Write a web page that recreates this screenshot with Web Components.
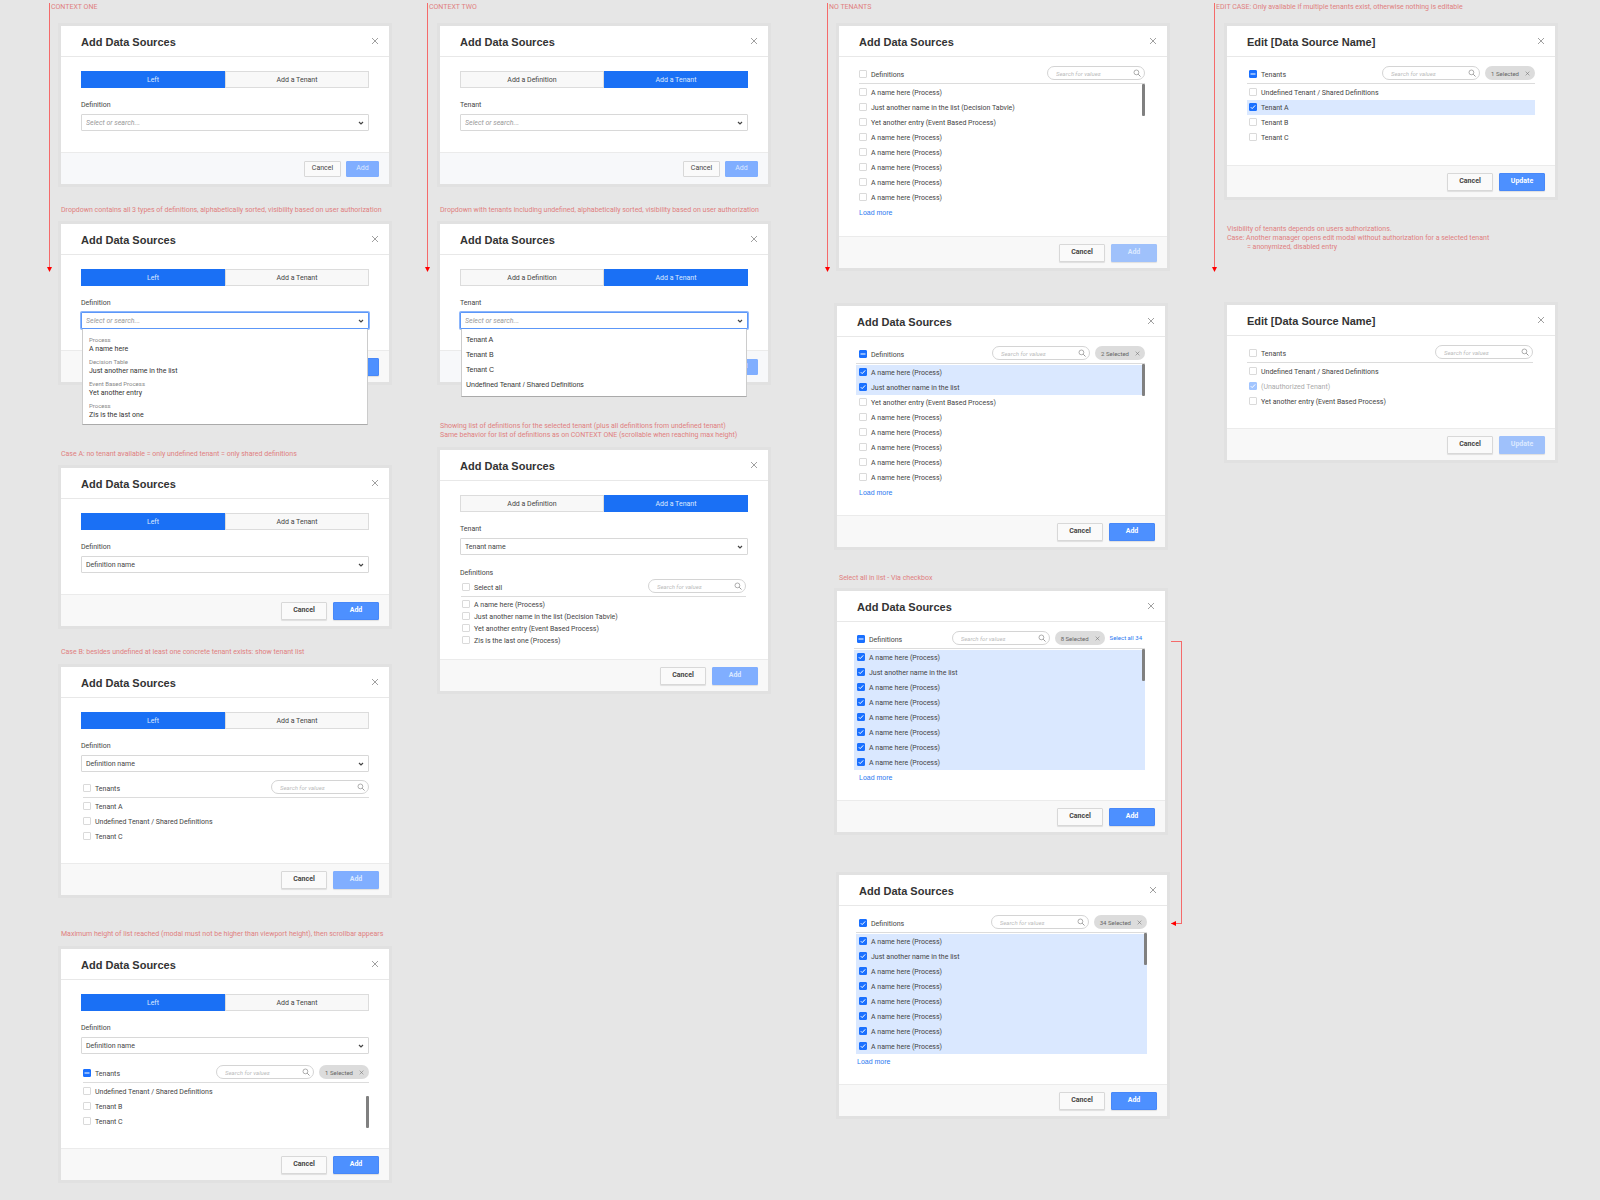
<!DOCTYPE html>
<html lang="en">
<head>
<meta charset="utf-8">
<title>Data Sources Modal</title>
<style>
    body {
        margin: 0;
        min-height: 100vh;
        background: #e6e6e6;
        color: #444;
        font: 7px/9px Roboto, "Liberation Sans", sans-serif;
    }

    main {
        display: grid;
        grid-template-columns: 378fr 400fr 387fr 341fr;
        padding: 3px 45px 0 49px;
    }

    .c1 { padding-right: 38px; }
    .c2 { padding-right: 59px; --indent: 13px; }
    .c3 { padding-right: 47px; }
    .c4 { --indent: 13px; }

    .outdent { margin: 0 2px 0 -2px; }
    .flow { position: relative; }
    .deep { padding-left: 20px; }
</style>
</head>
<body>
<main>
    <ds-context class="c1" heading="CONTEXT ONE">
        <ds-step>
            <ds-modal heading="Add Data Sources" action="Add" compact disabled style="--end: 21px">
                <ds-tabs first="Left" second="Add a Tenant" active="first"></ds-tabs>
                <ds-select label="Definition" placeholder="Select or search..."></ds-select>
            </ds-modal>
        </ds-step>
        <ds-step style="--before: 22px">
            <span slot="note">Dropdown contains all 3 types of definitions, alphabetically sorted, visibility based on user authorization</span>
            <ds-modal heading="Add Data Sources" action="Add" style="--end: 21px">
                <ds-tabs first="Left" second="Add a Tenant" active="first"></ds-tabs>
                <ds-select label="Definition" placeholder="Select or search..." open>
                    <ds-option kind="Process">A name here</ds-option>
                    <ds-option kind="Decision Table">Just another name in the list</ds-option>
                    <ds-option kind="Event Based Process">Yet another entry</ds-option>
                    <ds-option kind="Process">Zis is the last one</ds-option>
                </ds-select>
            </ds-modal>
        </ds-step>
        <ds-step style="--before: 68px">
            <span slot="note">Case A: no tenant available = only undefined tenant = only shared definitions</span>
            <ds-modal heading="Add Data Sources" action="Add" style="--end: 21px">
                <ds-tabs first="Left" second="Add a Tenant" active="first"></ds-tabs>
                <ds-select label="Definition" value="Definition name"></ds-select>
            </ds-modal>
        </ds-step>
        <ds-step style="--before: 22px; --note-gap: 10px">
            <span slot="note">Case B: besides undefined at least one concrete tenant exists: show tenant list</span>
            <ds-modal heading="Add Data Sources" action="Add" disabled style="--end: 19px">
                <ds-tabs first="Left" second="Add a Tenant" active="first"></ds-tabs>
                <ds-select label="Definition" value="Definition name"></ds-select>
                <ds-list label="Tenants" style="--list-margin: 8px 0 0 2px">
                    <ds-check>Tenant A</ds-check>
                    <ds-check>Undefined Tenant / Shared Definitions</ds-check>
                    <ds-check>Tenant C</ds-check>
                </ds-list>
            </ds-modal>
        </ds-step>
        <ds-step style="--before: 35px; --note-gap: 10px">
            <span slot="note">Maximum height of list reached (modal must not be higher than viewport height), then scrollbar appears</span>
            <ds-modal heading="Add Data Sources" action="Add" style="--end: 19px">
                <ds-tabs first="Left" second="Add a Tenant" active="first"></ds-tabs>
                <ds-select label="Definition" value="Definition name"></ds-select>
                <ds-list label="Tenants" state="mixed" selected="1 Selected" scroll style="--list-margin: 11px 0 0 2px; --thumb-top: 31px">
                    <ds-check>Undefined Tenant / Shared Definitions</ds-check>
                    <ds-check>Tenant B</ds-check>
                    <ds-check>Tenant C</ds-check>
                </ds-list>
            </ds-modal>
        </ds-step>
    </ds-context>

    <ds-context class="c2" heading="CONTEXT TWO">
        <ds-step>
            <ds-modal heading="Add Data Sources" action="Add" compact disabled style="--end: 21px">
                <ds-tabs first="Add a Definition" second="Add a Tenant" active="second"></ds-tabs>
                <ds-select label="Tenant" placeholder="Select or search..."></ds-select>
            </ds-modal>
        </ds-step>
        <ds-step style="--before: 22px">
            <span slot="note">Dropdown with tenants including undefined, alphabetically sorted, visibility based on user authorization</span>
            <ds-modal heading="Add Data Sources" action="Add" compact disabled style="--end: 21px">
                <ds-tabs first="Add a Definition" second="Add a Tenant" active="second"></ds-tabs>
                <ds-select label="Tenant" placeholder="Select or search..." open>
                    <ds-option>Tenant A</ds-option>
                    <ds-option>Tenant B</ds-option>
                    <ds-option>Tenant C</ds-option>
                    <ds-option>Undefined Tenant / Shared Definitions</ds-option>
                </ds-select>
            </ds-modal>
        </ds-step>
        <ds-step style="--before: 40px; --note-gap: 10px">
            <span slot="note">Showing list of definitions for the selected tenant (plus all definitions from undefined tenant)<br>Same behavior for list of definitions as on CONTEXT ONE (scrollable when reaching max height)</span>
            <ds-modal heading="Add Data Sources" action="Add" disabled style="--end: 13px">
                <ds-tabs first="Add a Definition" second="Add a Tenant" active="second"></ds-tabs>
                <ds-select label="Tenant" value="Tenant name"></ds-select>
                <ds-list caption="Definitions" label="Select all" style="--list-margin: 14px 2px 0 1px; --row: 12px; --pad: 1px">
                    <ds-check>A name here (Process)</ds-check>
                    <ds-check>Just another name in the list (Decision Tabvle)</ds-check>
                    <ds-check>Yet another entry (Event Based Process)</ds-check>
                    <ds-check>Zis is the last one (Process)</ds-check>
                </ds-list>
            </ds-modal>
        </ds-step>
    </ds-context>

    <ds-context class="c3" heading="NO TENANTS">
        <ds-step>
            <ds-modal heading="Add Data Sources" action="Add" disabled pale style="--start: 9px; --end: 19px">
                <ds-list label="Definitions" more scroll style="--list-margin: 0 2px 0 0">
                    <ds-check>A name here (Process)</ds-check>
                    <ds-check>Just another name in the list (Decision Tabvle)</ds-check>
                    <ds-check>Yet another entry (Event Based Process)</ds-check>
                    <ds-check>A name here (Process)</ds-check>
                    <ds-check>A name here (Process)</ds-check>
                    <ds-check>A name here (Process)</ds-check>
                    <ds-check>A name here (Process)</ds-check>
                    <ds-check>A name here (Process)</ds-check>
                </ds-list>
            </ds-modal>
        </ds-step>
        <ds-step class="outdent" style="--before: 38px">
            <ds-modal heading="Add Data Sources" action="Add" style="--start: 9px; --end: 18px">
                <ds-list label="Definitions" state="mixed" selected="2 Selected" more scroll style="--list-margin: 0 0 0 -1px; --pad: 3px">
                    <ds-check checked>A name here (Process)</ds-check>
                    <ds-check checked>Just another name in the list</ds-check>
                    <ds-check>Yet another entry (Event Based Process)</ds-check>
                    <ds-check>A name here (Process)</ds-check>
                    <ds-check>A name here (Process)</ds-check>
                    <ds-check>A name here (Process)</ds-check>
                    <ds-check>A name here (Process)</ds-check>
                    <ds-check>A name here (Process)</ds-check>
                </ds-list>
            </ds-modal>
        </ds-step>
        <div class="flow">
            <ds-step style="--before: 27px; --note-gap: 8px">
                <span slot="note">Select all in list - Via checkbox</span>
                <ds-modal class="outdent" heading="Add Data Sources" action="Add" style="--start: 9px; --end: 18px">
                    <ds-list label="Definitions" state="mixed" selected="8 Selected" all="Select all 34" more scroll style="--list-margin: 0 0 0 -3px; --pad: 3px; --more: 5px">
                        <ds-check checked>A name here (Process)</ds-check>
                        <ds-check checked>Just another name in the list</ds-check>
                        <ds-check checked>A name here (Process)</ds-check>
                        <ds-check checked>A name here (Process)</ds-check>
                        <ds-check checked>A name here (Process)</ds-check>
                        <ds-check checked>A name here (Process)</ds-check>
                        <ds-check checked>A name here (Process)</ds-check>
                        <ds-check checked>A name here (Process)</ds-check>
                    </ds-list>
                </ds-modal>
            </ds-step>
            <ds-step style="--before: 43px">
                <ds-modal heading="Add Data Sources" action="Add" style="--start: 9px; --end: 18px">
                    <ds-list label="Definitions" state="checked" selected="34 Selected" more scroll style="--list-margin: 0 0 0 -3px; --pad: 3px; --more: 1px">
                        <ds-check checked>A name here (Process)</ds-check>
                        <ds-check checked>Just another name in the list</ds-check>
                        <ds-check checked>A name here (Process)</ds-check>
                        <ds-check checked>A name here (Process)</ds-check>
                        <ds-check checked>A name here (Process)</ds-check>
                        <ds-check checked>A name here (Process)</ds-check>
                        <ds-check checked>A name here (Process)</ds-check>
                        <ds-check checked>A name here (Process)</ds-check>
                    </ds-list>
                </ds-modal>
            </ds-step>
            <ds-connector></ds-connector>
        </div>
    </ds-context>

    <ds-context class="c4" heading="EDIT CASE: Only available if multiple tenants exist, otherwise nothing is editable">
        <ds-step>
            <ds-modal heading="Edit [Data Source Name]" action="Update" style="--start: 9px; --end: 20px">
                <ds-list label="Tenants" state="mixed" selected="1 Selected" style="--pad: 2px">
                    <ds-check>Undefined Tenant / Shared Definitions</ds-check>
                    <ds-check checked>Tenant A</ds-check>
                    <ds-check>Tenant B</ds-check>
                    <ds-check>Tenant C</ds-check>
                </ds-list>
            </ds-modal>
        </ds-step>
        <ds-step style="--before: 28px; --note-gap: 53px">
            <span slot="note">Visibility of tenants depends on users authorizations.<br>Case: Another manager opens edit modal without authorization for a selected tenant<br><span class="deep">= anonymized, disabled entry</span></span>
            <ds-modal heading="Edit [Data Source Name]" action="Update" disabled pale style="--start: 9px; --end: 19px">
                <ds-list label="Tenants" style="--list-margin: 0 2px 0 0; --pad: 2px">
                    <ds-check>Undefined Tenant / Shared Definitions</ds-check>
                    <ds-check checked disabled>(Unauthorized Tenant)</ds-check>
                    <ds-check>Yet another entry (Event Based Process)</ds-check>
                </ds-list>
            </ds-modal>
        </ds-step>
    </ds-context>
</main>

<script>
const cross = `<svg viewBox="0 0 8 8" aria-hidden="true"><path d="M1 1l6 6M7 1l-6 6" fill="none" stroke="currentColor" stroke-width=".8"/></svg>`;

// column with its heading and the long arrow on the left
class DsContext extends HTMLElement {
    connectedCallback() {
        this.attachShadow({mode: "open"}).innerHTML = `
            <style>
                :host { display: block; position: relative; min-width: 0; }
                h2 { margin: 0 0 14px; padding-left: 2px; font: inherit; color: #e08080; white-space: nowrap; }
                .steps { padding-left: var(--indent, 12px); }
                .arrow { position: absolute; left: 0; top: 0; height: 265px; border-left: 1px solid #f56a6a; }
                .arrow svg { position: absolute; left: -3px; bottom: -4px; width: 5px; height: 5px; fill: #f00; }
            </style>
            <div class="arrow"><svg viewBox="0 0 5 5"><path d="M0 0h5L2.5 5z"/></svg></div>
            <h2>${this.getAttribute("heading")}</h2>
            <div class="steps"><slot></slot></div>`;
    }
}

// optional note with a modal below it
class DsStep extends HTMLElement {
    connectedCallback() {
        const note = this.querySelector("[slot=note]") ? `<p><slot name="note"></slot></p>` : "";
        this.attachShadow({mode: "open"}).innerHTML = `
            <style>
                :host { display: block; padding-top: var(--before, 0); }
                p { margin: 0 0 var(--note-gap, 9px); color: #e08080; white-space: nowrap; }
            </style>
            ${note}
            <slot></slot>`;
    }
}

class DsConnector extends HTMLElement {
    connectedCallback() {
        this.attachShadow({mode: "open"}).innerHTML = `
            <style>
                :host {
                    position: absolute;
                    left: calc(100% + 4px);
                    top: 94px;
                    bottom: 192px;
                    width: 10px;
                    border: 1px solid #f56a6a;
                    border-left: 0;
                }
                svg { position: absolute; left: 0; bottom: -3px; width: 5px; height: 5px; fill: #f00; }
            </style>
            <svg viewBox="0 0 5 5"><path d="M5 0v5L0 2.5z"/></svg>`;
    }
}

class DsModal extends HTMLElement {
    connectedCallback() {
        const off = this.hasAttribute("disabled") ? "disabled" : "";
        this.attachShadow({mode: "open"}).innerHTML = `
            <style>
                :host { display: block; background: #fff; box-shadow: 0 0 0 3px rgba(0, 0, 0, .02); }
                header {
                    display: flex;
                    align-items: center;
                    justify-content: space-between;
                    height: 30px;
                    padding: 0 10px 0 20px;
                    border-bottom: 1px solid #e8e8e8;
                }
                h3 { margin: 0; padding-top: 1px; font: 700 11px/14px "Liberation Sans", Arial, sans-serif; color: #333; }
                button { font: inherit; padding: 0; cursor: pointer; }
                .close { width: 8px; height: 8px; border: 0; background: none; color: #888; }
                .close svg { display: block; }
                .body { padding: var(--start, 14px) 20px var(--end, 20px); }
                footer {
                    display: flex;
                    align-items: center;
                    justify-content: flex-end;
                    gap: 6px;
                    height: 31px;
                    padding-right: 10px;
                    border-top: 1px solid #ebebeb;
                    background: #f8f8f8;
                }
                footer button {
                    box-sizing: border-box;
                    min-width: 46px;
                    height: 18px;
                    border: 1px solid #d8d8d8;
                    border-radius: 1px;
                    box-shadow: 0 1px 1px rgba(0, 0, 0, .1);
                    background: #fafafa;
                    color: #444;
                    font-weight: 700;
                }
                footer .primary { border-color: #4888f8; background: #4d90ff; color: #fff; }
                footer .primary:disabled { border-color: #80aeff; background: #80aeff; color: #dce9ff; }
                :host([pale]) .primary:disabled { border-color: #9fc1fb; background: #9fc1fb; }
                :host([compact]) footer { gap: 5px; background: #f7f8fa; }
                :host([compact]) footer button { min-width: 37px; height: 16px; box-shadow: none; font-weight: 400; }
                :host([compact]) footer .primary { min-width: 33px; }
            </style>
            <header>
                <h3>${this.getAttribute("heading")}</h3>
                <button class="close" aria-label="Close">${cross}</button>
            </header>
            <div class="body"><slot></slot></div>
            <footer>
                <button>Cancel</button>
                <button class="primary" ${off}>${this.getAttribute("action")}</button>
            </footer>`;
    }
}

class DsTabs extends HTMLElement {
    connectedCallback() {
        const tab = name => `<button role="tab" aria-selected="${this.getAttribute("active") === name}">${this.getAttribute(name)}</button>`;
        this.attachShadow({mode: "open"}).innerHTML = `
            <style>
                :host { display: block; }
                div { display: grid; grid-template-columns: 1fr 1fr; }
                button {
                    height: 17px;
                    padding: 2px 0 0;
                    border: 1px solid #dcdcdc;
                    background: #f8f8f8;
                    color: #444;
                    font: inherit;
                }
                button[aria-selected=true] { border-color: #1a70f5; background: #1a70f5; color: #dce9ff; }
            </style>
            <div role="tablist">${tab("first")}${tab("second")}</div>`;
    }
}

class DsSelect extends HTMLElement {
    connectedCallback() {
        const value = this.getAttribute("value");
        const menu = this.hasAttribute("open") ? `<div class="menu" role="listbox"><slot></slot></div>` : "";
        this.attachShadow({mode: "open"}).innerHTML = `
            <style>
                :host { display: block; margin-top: 13px; }
                label { display: block; margin-bottom: 4px; }
                .box { position: relative; }
                select {
                    display: block;
                    box-sizing: border-box;
                    width: 100%;
                    height: 17px;
                    padding: 1px 4px 0;
                    appearance: none;
                    border: 1px solid #d8d8d8;
                    border-radius: 1px;
                    background: #fff;
                    color: #444;
                    font: inherit;
                }
                .empty { color: #999; font-style: italic; }
                :host([open]) select { border-color: #5c97f8; box-shadow: 0 0 0 1px #8cb6fc; }
                svg { position: absolute; right: 5px; top: 6px; width: 6px; height: 6px; }
                .menu {
                    position: absolute;
                    z-index: 1;
                    top: 17px;
                    left: 1px;
                    right: 1px;
                    border: 1px solid #ccc;
                    border-top: 0;
                    border-bottom-color: #aaa;
                    background: #fff;
                    padding: 3px 0 4px;
                }
            </style>
            <label for="field">${this.getAttribute("label")}</label>
            <div class="box">
                <select id="field" class="${value ? "" : "empty"}"><option>${value || this.getAttribute("placeholder")}</option></select>
                <svg viewBox="0 0 6 6" aria-hidden="true"><path d="M1 2l2 2 2-2" fill="none" stroke="#444" stroke-width="1.2"/></svg>
                ${menu}
            </div>`;
    }
}

class DsOption extends HTMLElement {
    connectedCallback() {
        const kind = this.getAttribute("kind");
        this.setAttribute("role", "option");
        this.attachShadow({mode: "open"}).innerHTML = `
            <style>
                :host { display: block; padding: 3px 4px; font-family: "Liberation Sans", Arial, sans-serif; color: #333; }
                :host([kind]) { padding: 4px 6px 0; font-family: inherit; }
                small { display: block; margin-bottom: 1px; font-size: 6px; line-height: 8px; color: #888; }
            </style>
            ${kind ? `<small>${kind}</small>` : ""}<slot></slot>`;
    }
}

class DsCheck extends HTMLElement {
    connectedCallback() {
        this.attachShadow({mode: "open"}).innerHTML = `
            <style>
                :host { display: block; }
                :host([checked]:not([disabled])) { background: var(--mark, #dae8ff); }
                label {
                    display: flex;
                    align-items: center;
                    gap: 4px;
                    height: var(--row, 15px);
                    padding-left: var(--pad, 0);
                }
                span { padding-top: 2px; }
                input {
                    flex: none;
                    box-sizing: border-box;
                    width: 8px;
                    height: 8px;
                    margin: 0 0 1px;
                    appearance: none;
                    border: 1px solid #dadada;
                    border-radius: 1px;
                    background: #fff;
                }
                input:checked, input:indeterminate { border-color: #1a70ff; background: #1a70ff no-repeat center / 6px; }
                input:checked { background-image: url("data:image/svg+xml,%3Csvg xmlns='http://www.w3.org/2000/svg' viewBox='0 0 6 6'%3E%3Cpath d='M.8 3.2l1.4 1.4 3-3.2' fill='none' stroke='white'/%3E%3C/svg%3E"); }
                input:indeterminate { background-image: url("data:image/svg+xml,%3Csvg xmlns='http://www.w3.org/2000/svg' viewBox='0 0 6 6'%3E%3Cpath d='M.5 3h5' stroke='white'/%3E%3C/svg%3E"); }
                :host([disabled]) { color: #aaa; }
                :host([disabled]) input { opacity: .4; }
            </style>
            <label><input type="checkbox"><span><slot></slot></span></label>`;
        const box = this.shadowRoot.querySelector("input");
        box.checked = this.hasAttribute("checked");
        box.indeterminate = this.hasAttribute("mixed");
        box.disabled = this.hasAttribute("disabled");
    }
}

class DsList extends HTMLElement {
    connectedCallback() {
        const get = name => this.getAttribute(name);
        this.attachShadow({mode: "open"}).innerHTML = `
            <style>
                :host { display: block; position: relative; margin: var(--list-margin, 0); }
                .caption { margin: 0 0 1px -1px; }
                .head {
                    display: flex;
                    align-items: flex-start;
                    gap: 5px;
                    height: 17px;
                    margin-bottom: 1px;
                    border-bottom: 1px solid #dcdcdc;
                }
                .head ds-check { flex: 1; --row: 16px; --mark: none; }
                .search { position: relative; width: 98px; }
                .search input {
                    display: block;
                    box-sizing: border-box;
                    width: 100%;
                    height: 14px;
                    padding: 0 18px 0 8px;
                    border: 1px solid #d4d4d4;
                    border-radius: 7px;
                    background: #fff;
                    font: italic 6px/8px Roboto, "Liberation Sans", sans-serif;
                }
                .search input::placeholder { color: #bbb; }
                .search svg { position: absolute; right: 4px; top: 3px; width: 8px; height: 8px; }
                .chip {
                    display: flex;
                    align-items: center;
                    gap: 6px;
                    height: 14px;
                    padding: 0 5px 0 6px;
                    border-radius: 7px;
                    background: #dcdcdc;
                    color: #666;
                    font-size: 6px;
                }
                .chip button { width: 5px; height: 5px; padding: 0; border: 0; background: none; color: inherit; }
                .chip svg { display: block; }
                a { color: #2a78f0; text-decoration: none; }
                .all { padding-right: 3px; font-size: 6px; line-height: 14px; }
                .more {
                    display: block;
                    padding: 3px 0 0 var(--more, var(--pad, 0));
                    font-family: "Liberation Sans", Arial, sans-serif;
                }
                .thumb {
                    position: absolute;
                    top: var(--thumb-top, 18px);
                    right: 0;
                    width: 3px;
                    height: 32px;
                    border-radius: 1px;
                    background: #808080;
                }
            </style>
            ${get("caption") ? `<div class="caption">${get("caption")}</div>` : ""}
            <div class="head">
                <ds-check ${get("state") || ""}>${get("label")}</ds-check>
                <div class="search">
                    <input type="text" placeholder="Search for values" aria-label="Search for values">
                    <svg viewBox="0 0 8 8" fill="none" stroke="#999" aria-hidden="true"><circle cx="3.4" cy="3.4" r="2.4" stroke-width=".8"/><path d="M5.2 5.2l2.3 2.3"/></svg>
                </div>
                ${get("selected") ? `<div class="chip">${get("selected")}<button aria-label="Clear">${cross}</button></div>` : ""}
                ${get("all") ? `<a class="all" href="#">${get("all")}</a>` : ""}
            </div>
            <slot></slot>
            ${this.hasAttribute("more") ? `<a class="more" href="#">Load more</a>` : ""}
            ${this.hasAttribute("scroll") ? `<div class="thumb"></div>` : ""}`;
    }
}

customElements.define("ds-context", DsContext);
customElements.define("ds-step", DsStep);
customElements.define("ds-connector", DsConnector);
customElements.define("ds-modal", DsModal);
customElements.define("ds-tabs", DsTabs);
customElements.define("ds-select", DsSelect);
customElements.define("ds-option", DsOption);
customElements.define("ds-check", DsCheck);
customElements.define("ds-list", DsList);
</script>
</body>
</html>
